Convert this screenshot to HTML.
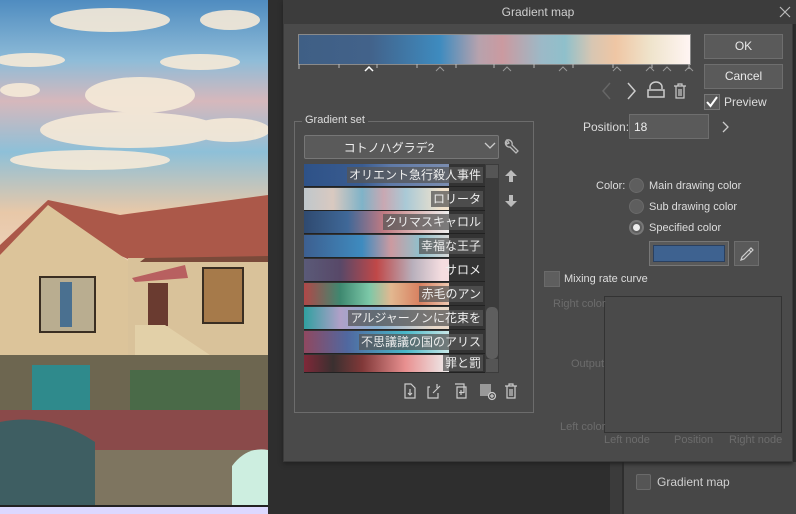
<!DOCTYPE html><html><head><meta charset="utf-8"><style>
*{margin:0;padding:0;box-sizing:border-box}
body{width:796px;height:514px;overflow:hidden;background:#2e2e2e;font-family:"Liberation Sans","Noto Sans CJK JP",sans-serif;font-size:11px;color:#ddd;position:relative}
.a{position:absolute}
.btn{position:absolute;background:#5a5a5a;border:1px solid #6e6e6e;color:#e8e8e8;font-size:12px;text-align:center}
.t{position:absolute;white-space:nowrap}
.row{position:absolute;left:304px;width:181px;height:23px;border-bottom:1px solid #222;background-size:145px 100%!important;background-repeat:no-repeat!important;background-color:#333!important}
.row span{position:absolute;right:2px;top:3px;font-size:12px;color:#eee;background:rgba(85,85,85,.75);padding:0 2px;line-height:16px}
.dis{color:#6c6c6c}
.rad{position:absolute;width:15px;height:15px;border-radius:50%;background:#5e5e5e;border:1px solid #6a6a6a}
</style></head><body>
<!-- canvas image -->
<svg class="a" style="left:0;top:0" width="268" height="514">
<defs><linearGradient id="sk" x1="0" y1="0" x2="0" y2="1">
<stop offset="0" stop-color="#4f8cc0"/><stop offset=".12" stop-color="#8fbcd8"/><stop offset=".2" stop-color="#d6b8bc"/><stop offset=".3" stop-color="#8ec0d8"/><stop offset=".42" stop-color="#e8c8a8"/><stop offset=".62" stop-color="#f3dcd0"/><stop offset="1" stop-color="#fbeef0"/></linearGradient></defs>
<rect width="268" height="514" fill="#dcd8ff"/>
<rect width="268" height="506" fill="url(#sk)"/>
<g fill="#f6ead8" opacity=".9">
<ellipse cx="110" cy="20" rx="60" ry="12"/><ellipse cx="30" cy="60" rx="35" ry="7"/><ellipse cx="200" cy="62" rx="40" ry="8"/>
<ellipse cx="140" cy="95" rx="55" ry="18"/><ellipse cx="130" cy="130" rx="90" ry="18"/><ellipse cx="230" cy="130" rx="40" ry="12"/><ellipse cx="20" cy="90" rx="20" ry="7"/>
<ellipse cx="90" cy="160" rx="80" ry="10"/><ellipse cx="230" cy="20" rx="30" ry="10"/></g>
<polygon points="0,245 48,200 120,215 268,195 268,262 135,262 50,225 0,255" fill="#ab5849"/>
<polygon points="0,255 48,205 130,262 130,360 0,360" fill="#dcc49a"/>
<rect x="128" y="258" width="140" height="100" fill="#d9c29a"/>
<polygon points="128,262 140,262 145,258 268,256 268,262" fill="#7a4a3a"/>
<rect x="40" y="277" width="55" height="55" fill="#b9ad90" stroke="#3a2e22" stroke-width="2"/>
<rect x="60" y="282" width="12" height="45" fill="#4a7090"/>
<rect x="203" y="268" width="40" height="55" fill="#a67a4a" stroke="#3a2e22" stroke-width="2"/>
<polygon points="132,278 185,265 188,278 135,282" fill="#b86060"/>
<rect x="148" y="283" width="20" height="43" fill="#6a3b30"/>
<polygon points="135,325 165,325 240,375 135,375" fill="#e2d0a8"/>
<rect x="0" y="355" width="268" height="60" fill="#6d6650"/>
<rect x="130" y="370" width="110" height="45" fill="#4a6a48"/>
<rect x="32" y="365" width="58" height="60" fill="#2f8a8c"/>
<rect x="0" y="410" width="268" height="42" fill="#8a4a4a"/>
<rect x="0" y="450" width="268" height="56" fill="#7e7560"/>
<path d="M0 422q50-10 95 20v64h-95z" fill="#3e5e62"/>
<path d="M232 506v-40q15-20 36-16v56z" fill="#cdeee0"/>
<rect x="0" y="505" width="268" height="2" fill="#222"/>
</svg>
<!-- below dialog panel -->
<div class="a" style="left:610px;top:462px;width:12px;height:52px;background:#3b3b3b"></div>
<div class="a" style="left:624px;top:462px;width:172px;height:52px;background:#474747"></div>
<div class="a" style="left:636px;top:474px;width:15px;height:16px;background:#555;border:1px solid #6a6a6a;border-radius:2px"></div>
<div class="t" style="left:657px;top:475px;font-size:12px;color:#cfcfcf">Gradient map</div>
<!-- dialog -->
<div class="a" style="left:283px;top:0;width:510px;height:462px;background:#4a4a4a;border:1px solid #3a3a3a;box-shadow:0 2px 4px #222"></div>
<div class="a" style="left:283px;top:0;width:513px;height:24px;background:#3c3c3c"></div>
<div class="t" style="left:0;width:1076px;text-align:center;top:5px;font-size:12px;color:#cfcfcf">Gradient map</div>
<svg class="a" style="left:778px;top:5px" width="14" height="14" stroke="#bbb" stroke-width="1.2"><path d="M2 2l10 10M12 2l-10 10"/></svg>
<div class="a" style="left:298px;top:34px;width:393px;height:31px;border:1px solid #8a8a8a;background:linear-gradient(90deg,#3f5f85 0%,#42628a 18%,#3e8bbf 36%,#b7a2ad 46%,#cb9aa0 52%,#9cb9c7 62%,#8fc0cb 68%,#d8c6b2 75%,#efc6a4 81%,#efe4cc 90%,#fff5f3 100%)"></div>
<svg class="a" style="left:296px;top:64px" width="400" height="10" stroke="#bbb" fill="none" stroke-width="1">
<path d="M3 0v5M43 0v4M81 0v4M121 0v4M160 0v4M198 0v4M238 0v4M277 0v4M317 0v4M356 0v4M393 0v5"/>
<path d="M140 7l4-4 4 4M207 7l4-4 4 4M263 7l4-4 4 4M317 7l4-4 4 4M350 7l4-4 4 4M367 7l4-4 4 4M389 7l4-4 4 4" stroke="#999"/>
<path d="M69 7l4-4 4 4" stroke="#fff" stroke-width="1.5"/>
</svg>
<svg class="a" style="left:598px;top:80px" width="96" height="22" fill="none" stroke-width="1.5">
<path d="M12 3l-7 8 7 8" stroke="#666"/><path d="M30 3l7 8-7 8" stroke="#ccc"/>
<path d="M52 9v-2a6 5 0 0 1 12 0v2M50 10h16v7h-16z" stroke="#ccc"/>
<path d="M76 6h12M80 6v-2h4v2M78 6v12h8v-12M81 9v7M83 9v7" stroke="#ccc" stroke-width="1.2"/>
</svg>
<div class="btn" style="left:704px;top:34px;width:79px;height:25px;line-height:23px">OK</div>
<div class="btn" style="left:704px;top:64px;width:79px;height:25px;line-height:23px">Cancel</div>
<div class="a" style="left:704px;top:94px;width:16px;height:16px;background:#5a5a5a;border:1px solid #777"></div>
<svg class="a" style="left:705px;top:95px" width="14" height="14" fill="none" stroke="#fff" stroke-width="2"><path d="M2 7l3.5 4L12 2"/></svg>
<div class="t" style="left:724px;top:95px;font-size:12px;color:#ddd">Preview</div>
<!-- gradient set -->
<div class="a" style="left:294px;top:121px;width:240px;height:292px;border:1px solid #6c6c6c"></div>
<div class="t" style="left:302px;top:114px;background:#4a4a4a;padding:0 3px;font-size:11px;color:#ddd">Gradient set</div>
<div class="a" style="left:304px;top:135px;width:195px;height:24px;background:#5a5a5a;border:1px solid #777;border-radius:2px"></div>
<div class="t" style="left:304px;width:170px;text-align:center;top:139px;font-size:12px;color:#eee">コトノハグラデ2</div>
<svg class="a" style="left:484px;top:142px" width="12" height="8" fill="none" stroke="#ccc" stroke-width="1.3"><path d="M1 1l5 5 5-5"/></svg>
<svg class="a" style="left:502px;top:138px" width="18" height="18" fill="none" stroke="#bbb" stroke-width="1.3"><path d="M4 3a4 4 0 0 0 4 6l6 6 2-2-6-6a4 4 0 0 0-5-5l2 3-2 1z"/></svg>
<div class="a" style="left:304px;top:164px;width:195px;height:209px;background:#333"></div>
<div class="row" style="top:164px;background:linear-gradient(90deg,#2e5288,#3a5c90 40%,#5f7aa8 60%,#7b8db0)"><span>オリエント急行殺人事件</span></div>
<div class="row" style="top:188px;background:linear-gradient(90deg,#bfc7cc,#d9c9c0 20%,#7fb3c8 40%,#c9a8b2 55%,#a9c9d6 70%,#f1e2cc 95%)"><span>ロリータ</span></div>
<div class="row" style="top:211px;background:linear-gradient(90deg,#2f4a70,#3f6898 30%,#c07a82 55%,#d9b0b0 75%,#eee)"><span>クリマスキャロル</span></div>
<div class="row" style="top:235px;background:linear-gradient(90deg,#3d5f90,#3e8bbf 40%,#cc9aa0 60%,#90c0cc 80%,#d8d8d8)"><span>幸福な王子</span></div>
<div class="row" style="top:259px;background:linear-gradient(90deg,#5a5a78,#584868 25%,#c04848 50%,#b8b0bc 75%,#f5dde0 95%)"><span style="background:none">サロメ</span></div>
<div class="row" style="top:283px;background:linear-gradient(90deg,#b04848,#3e8870 25%,#7cc8a8 45%,#e2b890 60%,#d88060 80%,#eec8b0)"><span>赤毛のアン</span></div>
<div class="row" style="top:307px;background:linear-gradient(90deg,#30a0a0,#b0a0c8 25%,#88b0d0 50%,#e8d8c8 90%)"><span>アルジャーノンに花束を</span></div>
<div class="row" style="top:331px;background:linear-gradient(90deg,#904860,#5068a0 30%,#48b8c8 70%,#c8e8e8)"><span>不思議議の国のアリス</span></div>
<div class="row" style="top:355px;height:18px;background:linear-gradient(90deg,#802838,#3a3030 20%,#803838 40%,#e89090 70%,#eee)"><span style="top:0">罪と罰</span></div>
<div class="a" style="left:485px;top:164px;width:14px;height:209px;background:#3c3c3c"></div>
<div class="a" style="left:486px;top:307px;width:12px;height:52px;background:#5e5e5e;border-radius:5px"></div>
<div class="a" style="left:486px;top:165px;width:12px;height:13px;background:#555"></div>
<div class="a" style="left:486px;top:359px;width:12px;height:13px;background:#555"></div>
<svg class="a" style="left:503px;top:168px" width="16" height="40" fill="#bbb"><path d="M8 2l6 6h-4v6h-4v-6h-4z"/><path d="M8 39l6-6h-4v-6h-4v6h-4z"/></svg>
<svg class="a" style="left:402px;top:381px" width="120" height="20" fill="none" stroke="#ccc" stroke-width="1.2">
<path d="M3 3h6l4 4v10h-10zM8 8v6M6 12l2 2 2-2"/>
<path d="M28 6h-2v11h10v-5M31 12l7-7M35 3v4"/>
<path d="M53 3h9v9M55 6h9v11h-9zM59 9v5M57 11.5h5"/>
<rect x="78" y="3" width="11" height="12" fill="#999" stroke="none"/><circle cx="90" cy="15" r="3.5" fill="#4a4a4a"/><path d="M88 15h4M90 13v4"/>
<path d="M103 5h12M107 5v-2h4v2M105 5v12h8v-12M108 8v7M110 8v7"/>
</svg>
<!-- right controls -->
<div class="t" style="left:583px;top:120px;font-size:12px;color:#ddd">Position:</div>
<div class="a" style="left:629px;top:114px;width:80px;height:25px;background:#5a5a5a;border:1px solid #6e6e6e"></div>
<div class="t" style="left:634px;top:120px;font-size:12px;color:#eee">18</div>
<svg class="a" style="left:720px;top:120px" width="10" height="14" fill="none" stroke="#ccc" stroke-width="1.3"><path d="M3 2l5 5-5 5"/></svg>
<div class="t" style="left:596px;top:180px;font-size:11px;color:#ddd">Color:</div>
<div class="rad" style="left:629px;top:178px"></div>
<div class="t" style="left:649px;top:180px;font-size:11px;color:#ddd">Main drawing color</div>
<div class="rad" style="left:629px;top:199px"></div>
<div class="t" style="left:649px;top:201px;font-size:11px;color:#ddd">Sub drawing color</div>
<div class="rad" style="left:629px;top:220px;border:2px solid #777"></div>
<div class="a" style="left:633px;top:224px;width:7px;height:7px;border-radius:50%;background:#eee"></div>
<div class="t" style="left:649px;top:222px;font-size:11px;color:#ddd">Specified color</div>
<div class="a" style="left:649px;top:241px;width:80px;height:25px;background:#5a5a5a;border:1px solid #777;padding:3px"><div style="width:100%;height:100%;background:#3e6290;border:1px solid #2a4060"></div></div>
<div class="a" style="left:734px;top:241px;width:25px;height:25px;background:#5a5a5a;border:1px solid #6e6e6e"></div>
<svg class="a" style="left:738px;top:245px" width="18" height="18" fill="none" stroke="#ccc" stroke-width="1.2"><path d="M3 15l1-3 7-7 2 2-7 7zM11 5l2-2 2 2-2 2"/></svg>
<div class="a" style="left:544px;top:271px;width:16px;height:16px;background:#5e5e5e;border:1px solid #6a6a6a"></div>
<div class="t" style="left:564px;top:273px;font-size:11px;color:#ddd">Mixing rate curve</div>
<div class="a" style="left:604px;top:296px;width:178px;height:137px;border:1px solid #333"></div>
<div class="t dis" style="left:553px;top:298px">Right color</div>
<div class="t dis" style="left:571px;top:358px">Output</div>
<div class="t dis" style="left:560px;top:421px">Left color</div>
<div class="t dis" style="left:604px;top:434px">Left node</div>
<div class="t dis" style="left:674px;top:434px">Position</div>
<div class="t dis" style="left:729px;top:434px">Right node</div>
</body></html>
